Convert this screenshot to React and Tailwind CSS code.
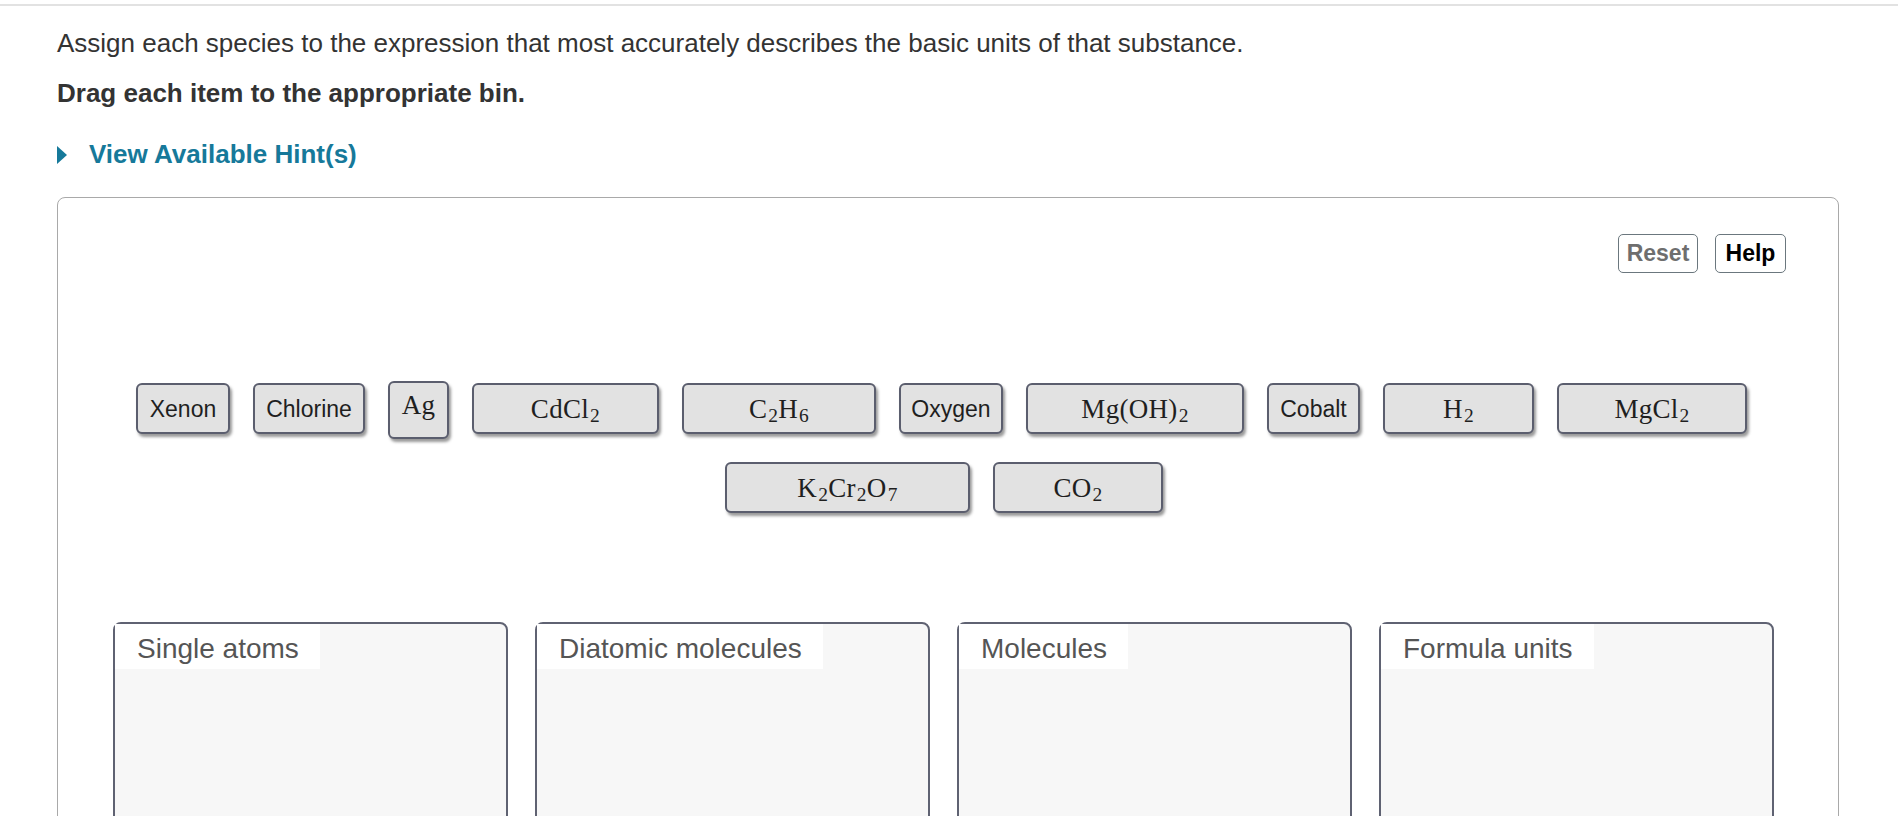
import React from 'react';

const sans = "font-['Liberation_Sans',Arial,Helvetica,sans-serif]";
const serif = "font-['Liberation_Serif','Times_New_Roman',serif]";

function Sub({ children }) {
  return <span className="relative top-[0.36em] text-[0.72em] leading-none ml-[1px]">{children}</span>;
}

function Chip({ children, math, w, tall }) {
  return (
    <div
      className={`flex justify-center border-[2.5px] border-[#5b5e6e] rounded-[6px] bg-[#e2e2e2] shadow-[2px_3px_3px_rgba(0,0,0,0.4)] text-[#1f1f1f] shrink-0 ${
        tall ? 'h-[58px] -mt-[2px] items-start pt-[7px]' : 'h-[51px] items-center'
      } ${math ? `${serif} text-[27px] leading-[30px] tracking-[0.3px]` : 'text-[23px] leading-[26px]'}`}
      style={{ width: w }}
    >
      {children}
    </div>
  );
}

function Bin({ label }) {
  return (
    <div className="w-[395px] h-[260px] border-2 border-[#5f6272] rounded-t-[8px] bg-[#f7f7f7] shrink-0">
      <div className="inline-block bg-white pl-[22px] pr-[21px] h-[45px] leading-[50px] text-[28px] text-[#555]">
        {label}
      </div>
    </div>
  );
}

export default function App() {
  return (
    <div className={`min-h-[816px] bg-white ${sans} overflow-hidden`}>
      <div className="mt-[4px] h-[2px] bg-[#e2e2e2]" />
      <div className="pl-[57px] pr-[59px]">
        <p className="mt-[22px] text-[26px] leading-[30px] text-[#333]">
          Assign each species to the expression that most accurately describes the basic units of that substance.
        </p>
        <p className="mt-[20px] text-[26px] leading-[30px] font-bold text-[#333]">
          Drag each item to the appropriate bin.
        </p>
        <div className="mt-[31px] flex items-center h-[30px]">
          <svg width="10" height="18" viewBox="0 0 10 18" className="mt-[2px]">
            <polygon points="0,0 10,9 0,18" fill="#16799a" />
          </svg>
          <span className="ml-[22px] text-[26px] leading-[30px] font-bold text-[#16799a]">View Available Hint(s)</span>
        </div>

        <div className="mt-[28px] border border-[#a9a9a9] rounded-[8px] h-[700px]">
          <div className="flex justify-end gap-[17px] pt-[36px] pr-[52px]">
            <button className="w-[80px] h-[39px] border-[1.5px] border-[#6b777e] rounded-[5px] text-[23px] font-bold text-[#6e6e6e] bg-white">
              Reset
            </button>
            <button className="w-[71px] h-[39px] border-[1.5px] border-[#6b777e] rounded-[5px] text-[23px] font-bold text-black bg-white">
              Help
            </button>
          </div>

          <div className="mt-[110px] flex justify-center items-start gap-[23px] h-[51px] pr-[13px]">
            <Chip w={94}>Xenon</Chip>
            <Chip w={112}>Chlorine</Chip>
            <Chip w={61} math tall>Ag</Chip>
            <Chip w={187} math>CdCl<Sub>2</Sub></Chip>
            <Chip w={194} math>C<Sub>2</Sub>H<Sub>6</Sub></Chip>
            <Chip w={104}>Oxygen</Chip>
            <Chip w={218} math>Mg(OH)<Sub>2</Sub></Chip>
            <Chip w={93}>Cobalt</Chip>
            <Chip w={151} math>H<Sub>2</Sub></Chip>
            <Chip w={190} math>MgCl<Sub>2</Sub></Chip>
          </div>
          <div className="mt-[28px] flex justify-center items-start gap-[23px] h-[51px] pr-[8px]">
            <Chip w={245} math>K<Sub>2</Sub>Cr<Sub>2</Sub>O<Sub>7</Sub></Chip>
            <Chip w={170} math>CO<Sub>2</Sub></Chip>
          </div>

          <div className="mt-[109px] flex justify-center gap-[27px] pr-[9px]">
            <Bin label="Single atoms" />
            <Bin label="Diatomic molecules" />
            <Bin label="Molecules" />
            <Bin label="Formula units" />
          </div>
        </div>
      </div>
    </div>
  );
}
